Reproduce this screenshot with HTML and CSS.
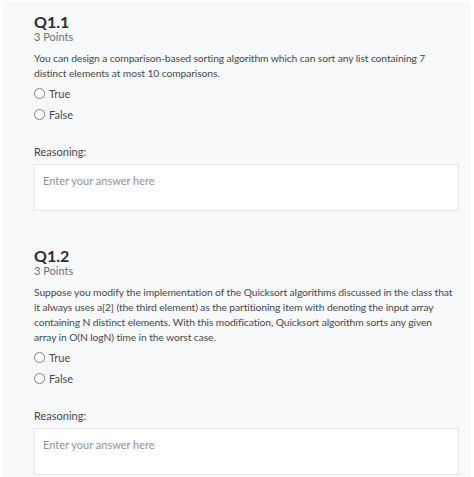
FILE: index.html
```html
<!DOCTYPE html>
<html lang="en">
<head>
  <meta charset="UTF-8" />
  <title>Assignment</title>
  <link rel="stylesheet" href="styles.css">
</head>
<body>
  <div class="page">
    <!-- Question 1.1 -->
    <div class="question">
      <h2>Q1.1</h2>
      <div class="points">3 Points</div>
      <p class="prompt">You can design a comparison-based sorting algorithm which can sort any list containing 7 distinct elements at most 10 comparisons.</p>
      <div class="options">
        <label class="option"><span class="radio"></span>True</label>
        <label class="option"><span class="radio"></span>False</label>
      </div>
      <div class="reasoning">
        <div class="reasoning-label">Reasoning:</div>
        <textarea class="answer" placeholder="Enter your answer here"></textarea>
      </div>
    </div>

    <!-- Question 1.2 -->
    <div class="question">
      <h2>Q1.2</h2>
      <div class="points">3 Points</div>
      <p class="prompt">Suppose you modify the implementation of the Quicksort algorithms discussed in the class that it always uses a[2] (the third element) as the partitioning item with denoting the input array containing N distinct elements. With this modification, Quicksort algorithm sorts any given array in O(N logN) time in the worst case.</p>
      <div class="options">
        <label class="option"><span class="radio"></span>True</label>
        <label class="option"><span class="radio"></span>False</label>
      </div>
      <div class="reasoning">
        <div class="reasoning-label">Reasoning:</div>
        <textarea class="answer" placeholder="Enter your answer here"></textarea>
      </div>
    </div>
  </div>
</body>
</html>
```

FILE: styles.css
```css
* {
  box-sizing: border-box;
  margin: 0;
  padding: 0;
}
body {
  font-family: Lato, 'Liberation Sans', Arial, sans-serif;
  background-color: #fff;
  color: #45494d;
  padding: 2px 4px 0 3px;
  height: 477px;
  overflow: hidden;
}
.page {
  background-color: #f8f9fa;
  padding: 11px 11px 0 31px;
  height: 100%;
}
.question {
  margin-bottom: 36px;
}
.question h2 {
  font-size: 16px;
  font-weight: 700;
  color: #2b2e31;
  line-height: 17px;
}
.points {
  font-size: 11px;
  color: #6b7075;
  line-height: 13px;
}
.prompt {
  font-size: 10.3px;
  letter-spacing: -0.1px;
  line-height: 15px;
  margin: 8px 4px 0 0;
}
.options {
  margin-top: 2px;
}
.option {
  display: flex;
  align-items: center;
  font-size: 11px;
  line-height: 21px;
}
.radio {
  width: 11px;
  height: 11px;
  border: 1.5px solid #7a7f84;
  border-radius: 50%;
  margin-right: 4px;
  background-color: #fff;
}
.reasoning {
  margin-top: 19px;
}
.reasoning-label {
  font-size: 11px;
  line-height: 16px;
  margin-bottom: 4px;
}
.answer {
  display: block;
  width: 100%;
  height: 47px;
  border: 1px solid #e4e6e8;
  background-color: #fff;
  padding: 9px 8px;
  font-family: inherit;
  font-size: 11px;
  resize: none;
}
.answer::placeholder {
  color: #8e9297;
}
```
